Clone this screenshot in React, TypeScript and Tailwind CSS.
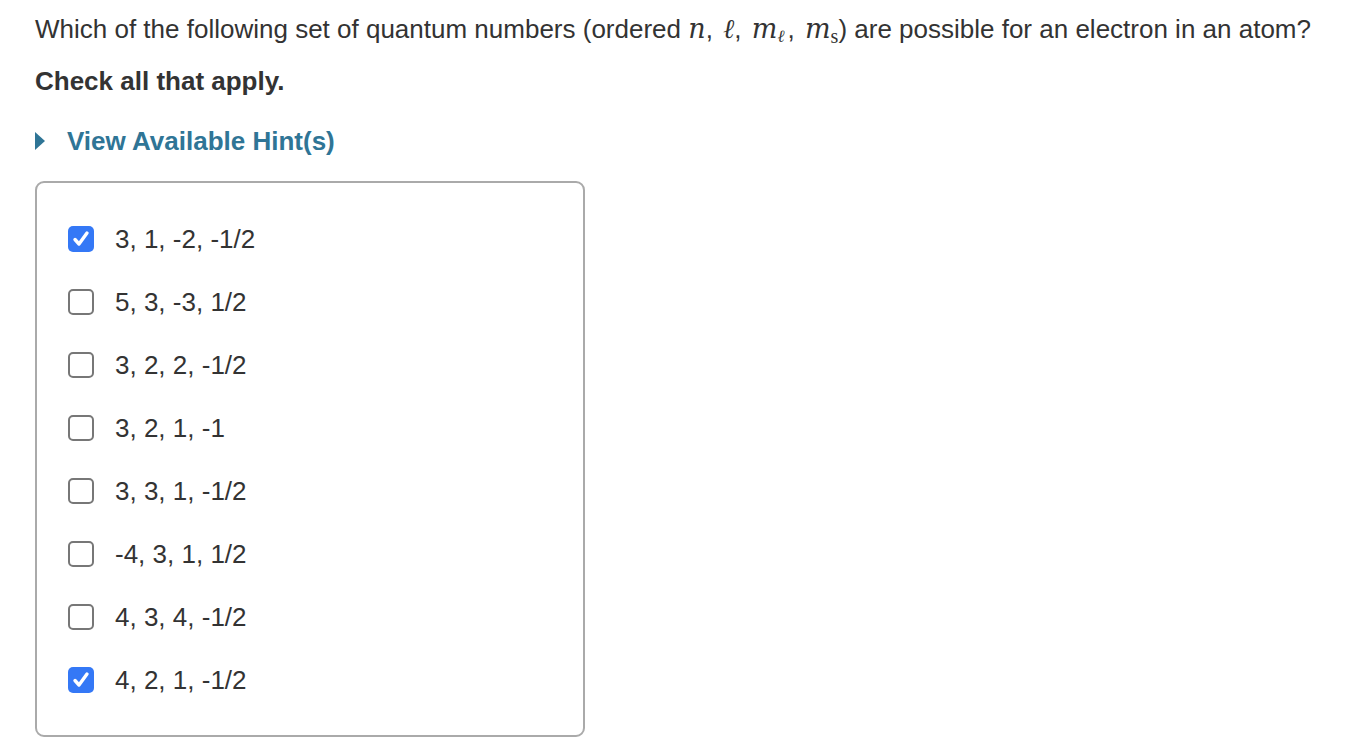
import React from "react";

const OPTIONS: { label: string; checked: boolean }[] = [
  { label: "3, 1, -2, -1/2", checked: true },
  { label: "5, 3, -3, 1/2", checked: false },
  { label: "3, 2, 2, -1/2", checked: false },
  { label: "3, 2, 1, -1", checked: false },
  { label: "3, 3, 1, -1/2", checked: false },
  { label: "-4, 3, 1, 1/2", checked: false },
  { label: "4, 3, 4, -1/2", checked: false },
  { label: "4, 2, 1, -1/2", checked: true },
];

function Box({ checked }: { checked: boolean }) {
  if (checked) {
    return (
      <span className="flex h-[26px] w-[26px] shrink-0 items-center justify-center rounded-[5px] bg-[#3478f6]">
        <svg width="20" height="20" viewBox="0 0 20 20" fill="none">
          <path d="M4 10.5L8 15L16 4" stroke="white" strokeWidth="3.4" strokeLinecap="round" strokeLinejoin="round" />
        </svg>
      </span>
    );
  }
  return <span className="h-[26px] w-[26px] shrink-0 rounded-[5px] border-2 border-[#777] bg-white" />;
}

function M({ children }: { children: React.ReactNode }) {
  return <span className="font-['DejaVu_Serif',serif] text-[27px] italic">{children}</span>;
}

export default function App() {
  return (
    <main className="min-h-screen bg-white px-[35px] pt-[12px] font-['Liberation_Sans',Arial,sans-serif] text-[#333]">
      <p className="whitespace-nowrap text-[26px] leading-[34px]">
        Which of the following set of quantum numbers (ordered <M>n</M>
        <span className="mr-[3px]">,</span> <M>ℓ</M>
        <span className="mr-[3px]">,</span>{" "}
        <M>
          m<sub className="text-[17px]">ℓ</sub>
        </M>
        <span className="ml-[3px] mr-[3px]">,</span>{" "}
        <M>
          m<sub className="font-['Liberation_Serif',serif] text-[20px] not-italic">s</sub>
        </M>
        ) are possible for an electron in an atom?
      </p>
      <p className="mt-[18px] text-[26px] font-bold leading-[34px]">Check all that apply.</p>

      <button className="mt-[26px] flex items-center gap-[22px] text-[26px] font-bold leading-[34px] text-[#2f7596]">
        <svg width="10" height="18" viewBox="0 0 10 18">
          <path d="M0 0L10 9L0 18Z" fill="#2f7596" />
        </svg>
        View Available Hint(s)
      </button>

      <div className="mt-[23px] w-[550px] rounded-[9px] border-2 border-[#aaa] pb-[38px] pl-[31px] pt-[39px]">
        <div className="flex flex-col gap-[29px]">
          {OPTIONS.map((o) => (
            <label key={o.label} className="flex h-[34px] items-center gap-[21px] text-[26px]">
              <Box checked={o.checked} />
              <span>{o.label}</span>
            </label>
          ))}
        </div>
      </div>
    </main>
  );
}
